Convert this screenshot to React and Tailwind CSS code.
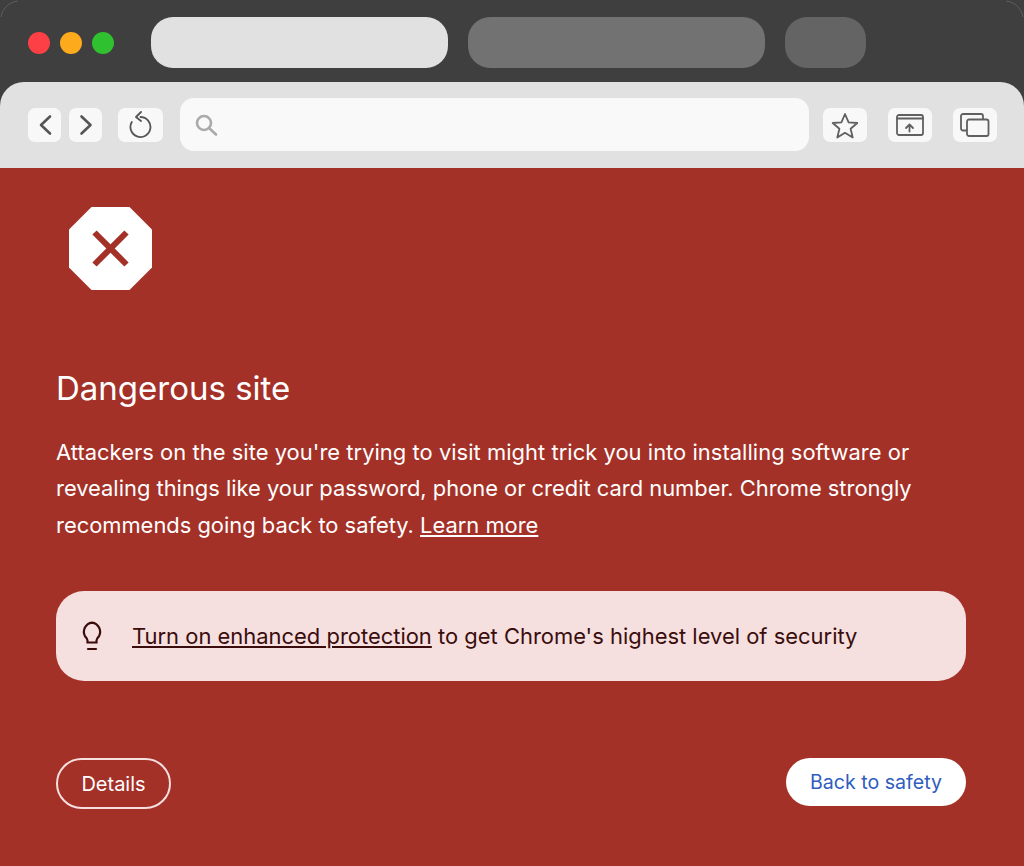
const font = { fontFamily: "Inter, 'Liberation Sans', sans-serif" };

function IconBtn({ className, children }) {
  return <div className={"h-[34px] rounded-[7px] bg-[#f8f8f8] flex items-center justify-center shrink-0 " + className}>{children}</div>;
}

function CornerArcs() {
  return (
    <>
      <svg className="absolute left-0 top-0" width="24" height="24" viewBox="0 0 24 24" fill="none" stroke="#5c5c5c" strokeWidth="1"><path d="M1 17C2 9 9 2 18 1" /></svg>
      <svg className="absolute right-0 top-0" width="24" height="24" viewBox="0 0 24 24" fill="none" stroke="#5c5c5c" strokeWidth="1"><path d="M23 17C22 9 15 2 6 1" /></svg>
    </>
  );
}

export default function App() {
  return (
    <div className="relative w-[1024px] h-[866px] bg-[#a43128] flex flex-col overflow-hidden font-['Inter']">
      <CornerArcs />
      <div className="h-[82px] bg-[#3f3f3f] flex items-start shrink-0 pl-[28px]">
        <div className="flex gap-[10px] mt-[32px]">
          <div className="w-[22px] h-[22px] rounded-full bg-[#fc4045]" />
          <div className="w-[22px] h-[22px] rounded-full bg-[#fdab1c]" />
          <div className="w-[22px] h-[22px] rounded-full bg-[#2fc12f]" />
        </div>
        <div className="flex mt-[17px] ml-[37px] gap-[20px]">
          <div className="w-[297px] h-[51px] rounded-[22px] bg-[#e1e1e1]" />
          <div className="w-[297px] h-[51px] rounded-[22px] bg-[#727272]" />
          <div className="w-[81px] h-[51px] rounded-[22px] bg-[#646464]" />
        </div>
      </div>
      <div className="bg-[#3f3f3f] shrink-0">
        <div className="h-[86px] bg-[#e1e1e1] rounded-t-[24px] flex items-start pl-[28px]">
          <div className="flex gap-[8px] mt-[26px]">
            <IconBtn className="w-[33px]">
              <svg width="16" height="24" viewBox="0 0 16 24" fill="none" stroke="#555555" strokeWidth="2.6" strokeLinecap="round" strokeLinejoin="round"><path d="M13 3.5 4 12l9 8.5" /></svg>
            </IconBtn>
            <IconBtn className="w-[33px]">
              <svg width="16" height="24" viewBox="0 0 16 24" fill="none" stroke="#555555" strokeWidth="2.6" strokeLinecap="round" strokeLinejoin="round"><path d="m3.5 3.5 9 8.5-9 8.5" /></svg>
            </IconBtn>
          </div>
          <IconBtn className="w-[45px] mt-[26px] ml-[16px]">
            <svg width="24" height="28" viewBox="0 0 24 28" fill="none" stroke="#555555" strokeWidth="1.8" strokeLinecap="round" strokeLinejoin="round"><path d="M11.5 6a10 10 0 1 1-8.7 5" /><path d="M12 1 7 6l5 4" /></svg>
          </IconBtn>
          <div className="w-[629px] h-[53px] mt-[16px] ml-[17px] rounded-[14px] bg-[#f9f9f9] flex items-center pl-[14px] shrink-0">
            <svg width="24" height="26" viewBox="0 0 24 26" fill="none" stroke="#aaaaaa" strokeWidth="2.6" strokeLinecap="round"><circle cx="10" cy="11" r="7" /><path d="m15 16 7 6.5" /></svg>
          </div>
          <IconBtn className="w-[44px] mt-[26px] ml-[14px]">
            <svg width="28" height="27" viewBox="0 0 28 27" fill="none" stroke="#606060" strokeWidth="1.8" strokeLinejoin="round"><path d="m14 2 3.6 8.3 8.7.7-6.7 5.8 2.1 8.7-7.7-4.7-7.7 4.7 2.1-8.7L1.7 11l8.7-.7z" /></svg>
          </IconBtn>
          <IconBtn className="w-[44px] mt-[26px] ml-[21px]">
            <svg width="28" height="22" viewBox="0 0 28 22" fill="none" stroke="#606060" strokeWidth="1.8" strokeLinecap="round" strokeLinejoin="round"><rect x="1" y="1" width="26" height="20" rx="2" /><path d="M1 4.5h26" /><path d="M13.5 17.5V10.5M10 14l3.5-3.5L17 14" /></svg>
          </IconBtn>
          <IconBtn className="w-[44px] mt-[26px] ml-[21px]">
            <svg width="30" height="24" viewBox="0 0 30 24" fill="none" stroke="#606060" strokeWidth="1.8" strokeLinejoin="round"><path d="M7 17.5H3a2 2 0 0 1-2-2V3a2 2 0 0 1 2-2h18a2 2 0 0 1 2 2v3.5" /><rect x="7" y="6.5" width="21.5" height="16.5" rx="2" /></svg>
          </IconBtn>
        </div>
      </div>
      <div className="flex-1 flex flex-col pl-[56px] pr-[58px]" style={font}>
        <svg className="mt-[39px] ml-[13px] shrink-0" width="83" height="83" viewBox="0 0 83 83">
          <path d="M22.5 0h38L83 22.5v38L60.5 83h-38L0 60.5v-38z" fill="#ffffff" />
          <path d="M25.5 25.5l32 32M57.5 25.5l-32 32" stroke="#a43128" strokeWidth="6" />
        </svg>
        <h1 className="mt-[78px] text-[33px] leading-[40px] font-normal text-white">Dangerous site</h1>
        <p className="mt-[26px] text-[21.9px] leading-[36.4px] text-white">
          <span className="tracking-[0.05px]">Attackers on the site you're trying to visit might trick you into installing software or</span><br />
          revealing things like your password, phone or credit card number. Chrome strongly<br />
          recommends going back to safety. <a className="underline decoration-2 underline-offset-[2px]">Learn more</a>
        </p>
        <div className="mt-[48px] h-[90px] rounded-[28px] bg-[#f5dfdf] flex items-center pl-[23px] text-[#3a0d0c] text-[21.95px]">
          <svg width="26" height="30" viewBox="0 0 26 30" fill="none" stroke="#3a0d0c" strokeWidth="2.2" strokeLinecap="round"><path d="M8.5 21.5v-2c0-1.5-1-2.5-2.5-4.3A9.3 9.3 0 0 1 13 1.6a9.3 9.3 0 0 1 7 13.6c-1.5 1.8-2.5 2.8-2.5 4.3v2z" /><path d="M9 28h8" /></svg>
          <span className="ml-[27px]"><a className="underline decoration-2 underline-offset-[2px]">Turn on enhanced protection</a> to get Chrome's highest level of security</span>
        </div>
        <div className="mt-[77px] flex justify-between items-start">
          <button className="w-[115px] h-[51px] rounded-full border-2 border-[#f5dfdf] text-white text-[20px]">Details</button>
          <button className="w-[180px] h-[48px] rounded-full bg-white text-[#2f5cc0] text-[19.6px]">Back to safety</button>
        </div>
      </div>
    </div>
  );
}
